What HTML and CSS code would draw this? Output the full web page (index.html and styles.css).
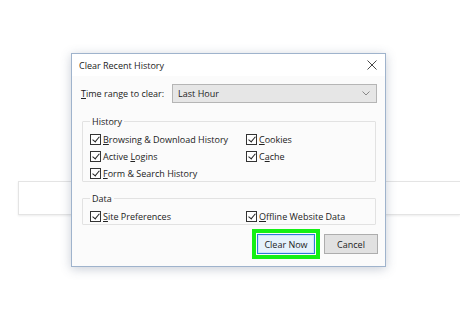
FILE: index.html
```html
<!DOCTYPE html>
<html lang="en">
<head>
    <meta charset="UTF-8">
    <title>Clear Recent History</title>
    <link rel="stylesheet" href="styles.css">
</head>
<body>
    <div class="backdrop">
        <div class="card"></div>
    </div>

    <div class="dialog">
        <div class="titlebar">
            <span>Clear Recent History</span>
            <svg class="close" width="10" height="10" viewBox="0 0 10 10">
                <path d="M0.5 0.5 L9.5 9.5 M9.5 0.5 L0.5 9.5" stroke="#333" stroke-width="0.9" fill="none"/>
            </svg>
        </div>

        <div class="content">
            <div class="range">
                <label><u>T</u>ime range to clear:</label>
                <div class="select">
                    <span>Last Hour</span>
                    <svg width="8" height="5" viewBox="0 0 8 5">
                        <path d="M0.5 0.5 L4 4 L7.5 0.5" stroke="#888" stroke-width="1" fill="none"/>
                    </svg>
                </div>
            </div>

            <fieldset class="group history">
                <legend>History</legend>
                <div class="checks">
                    <div class="check"><i></i><span><u>B</u>rowsing &amp; Download History</span></div>
                    <div class="check"><i></i><span><u>C</u>ookies</span></div>
                    <div class="check"><i></i><span>Active <u>L</u>ogins</span></div>
                    <div class="check"><i></i><span>C<u>a</u>che</span></div>
                    <div class="check"><i></i><span><u>F</u>orm &amp; Search History</span></div>
                </div>
            </fieldset>

            <fieldset class="group">
                <legend>Data</legend>
                <div class="checks">
                    <div class="check"><i></i><span><u>S</u>ite Preferences</span></div>
                    <div class="check"><i></i><span><u>O</u>ffline Website Data</span></div>
                </div>
            </fieldset>

            <div class="buttons">
                <div class="highlight">
                    <button class="primary">Clear Now</button>
                </div>
                <button>Cancel</button>
            </div>
        </div>
    </div>
</body>
</html>
```

FILE: styles.css
```css
body {
    margin: 0;
    width: 460px;
    height: 316px;
    background: #fff;
    font-family: "Open Sans", "Noto Sans", sans-serif;
    font-size: 9px;
    color: #222;
    position: relative;
    overflow: hidden;
}

.backdrop {
    padding: 181px 0 0 18px;
}

.card {
    height: 32px;
    border: 1px solid #e4e4e4;
    border-right: none;
    box-shadow: 0 1px 2px rgba(0, 0, 0, 0.08);
}

/* ventana de dialogo */
.dialog {
    position: absolute;
    left: 71px;
    top: 53px;
    width: 313px;
    height: 212px;
    background: #fbfbfb;
    border: 1px solid #9fb3cc;
    box-shadow: 0 2px 10px rgba(60, 80, 110, 0.28);
    display: flex;
    flex-direction: column;
}

.titlebar {
    height: 22px;
    background: #fff;
    display: flex;
    align-items: center;
    justify-content: space-between;
    padding: 0 8px 0 7px;
}

.content {
    padding: 8px 8px 0 9px;
    display: flex;
    flex-direction: column;
}

u {
    text-decoration: underline;
    text-underline-offset: 1px;
}

.range {
    display: flex;
    align-items: center;
    gap: 8px;

    .select {
        flex: 1;
        height: 17px;
        border: 1px solid #b5b5b5;
        background: #e6e6e6;
        display: flex;
        align-items: center;
        justify-content: space-between;
        padding: 0 6px 0 5px;
    }
}

.group {
    margin: 10px 1px 0 1px;
    padding: 0 6px 1px 7px;
    border: 1px solid #e2e2e2;
    border-radius: 1px;

    legend {
        padding: 0 2px;
        margin-left: 0;
    }

    &.history {
        margin-top: 12px;
    }
}

.checks {
    display: grid;
    grid-template-columns: 156px 1fr;
    row-gap: 3px;
    padding-top: 4px;
}

.check {
    display: flex;
    align-items: center;
    gap: 2px;
    height: 14px;

    i {
        width: 9px;
        height: 9px;
        border: 1px solid #333;
        background: #fff;
        position: relative;
    }

    i::after {
        content: "";
        position: absolute;
        left: 3px;
        top: 0px;
        width: 3px;
        height: 6px;
        border: solid #222;
        border-width: 0 1px 1px 0;
        transform: rotate(40deg);
    }
}

.buttons {
    display: flex;
    justify-content: flex-end;
    align-items: center;
    gap: 4px;
    margin-top: 4px;
    margin-right: -1px;

    button {
        font: inherit;
        color: #222;
        width: 54px;
        height: 20px;
        border: 1px solid #adadad;
        background: #e1e1e1;
        padding: 0;
    }

    .primary {
        width: 58px;
        border: 1px solid #2f7ad6;
        background: #e5f1fb;
        box-shadow: inset 0 0 0 1px #cfe3f7;
    }
}

.highlight {
    border: 4px solid #14f014;
    padding: 1px;
}
```
